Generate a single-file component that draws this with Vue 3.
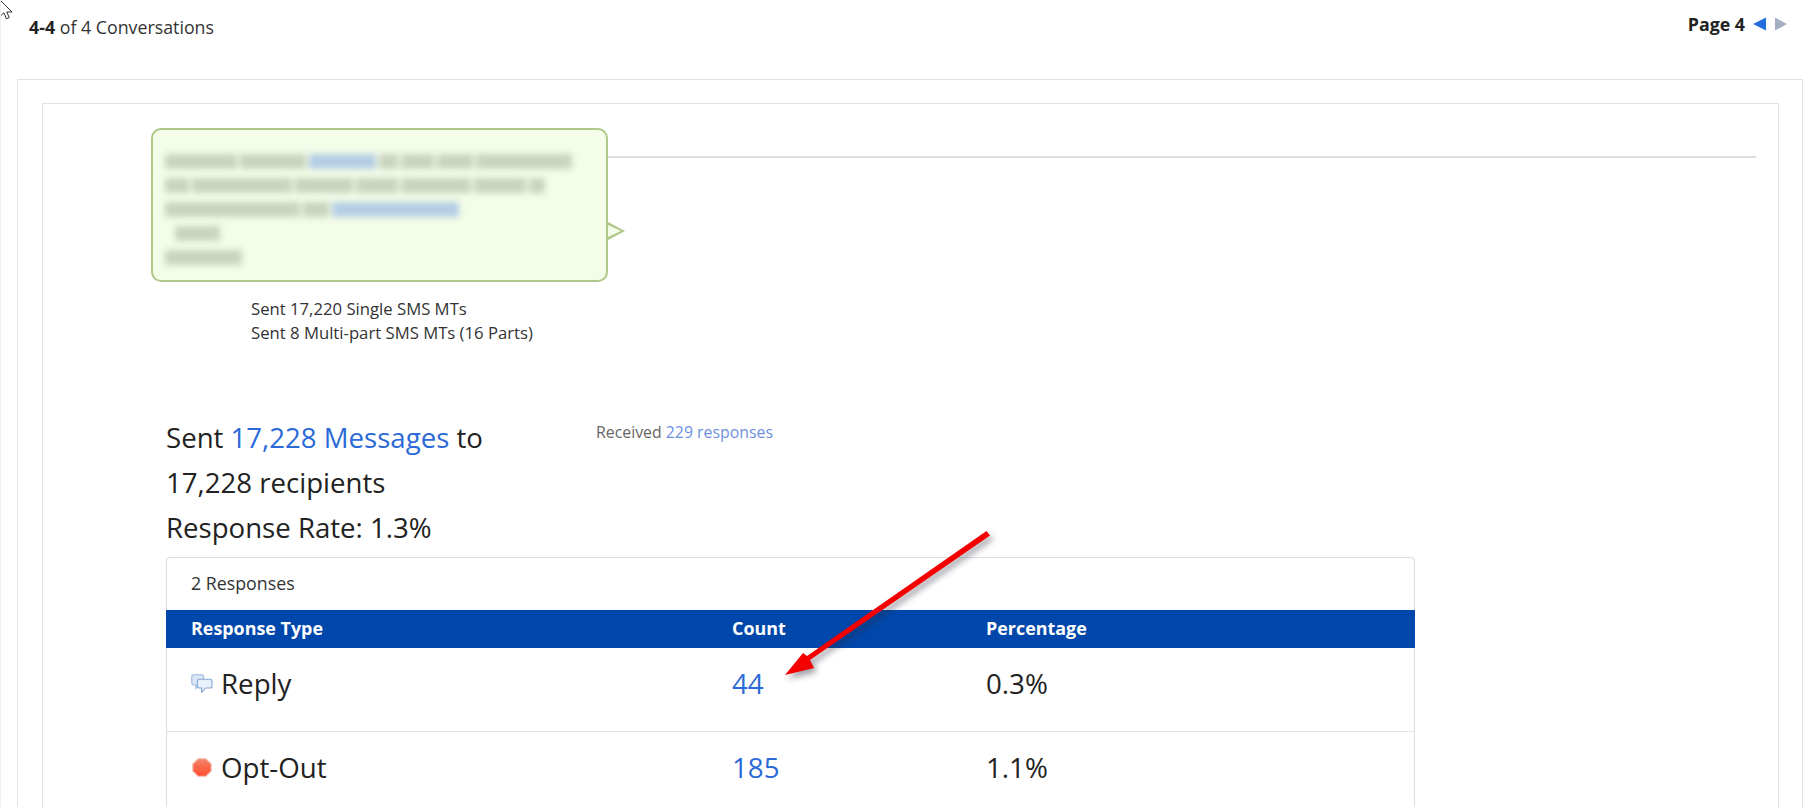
<script setup>
const blurLines = [
  [{ w: 72 }, { w: 66 }, { w: 67, l: true }, { w: 19 }, { w: 33 }, { w: 36 }, { w: 96 }],
  [{ w: 24 }, { w: 100 }, { w: 58 }, { w: 42 }, { w: 70 }, { w: 52 }, { w: 16 }],
  [{ w: 135 }, { w: 26 }, { w: 127, l: true }],
  [{ w: 45 }],
  [{ w: 77 }]
]
const rows = [
  { icon: 'reply', name: 'Reply', count: '44', pct: '0.3%' },
  { icon: 'stop', name: 'Opt-Out', count: '185', pct: '1.1%' }
]
</script>

<template>
  <div class="page">
    <header class="topbar">
      <div class="range"><b>4-4</b> of 4 Conversations</div>
      <div class="pager">
        <b>Page 4</b>
        <svg width="34" height="14" viewBox="0 0 34 14">
          <path d="M0 7 L13 0.5 V13.5 Z" fill="#2270dc" />
          <path d="M22 0.5 L34 7 L22 13.5 Z" fill="#a4aec2" />
        </svg>
      </div>
    </header>

    <div class="outer">
      <div class="inner">
        <div class="thread">
          <div class="bubble">
            <div v-for="(line, i) in blurLines" :key="i" class="blur-line" :class="'l' + i">
              <span
                v-for="(seg, j) in line"
                :key="j"
                class="seg"
                :class="{ link: seg.l }"
                :style="{ width: seg.w + 'px' }"
              ></span>
            </div>
          </div>
          <div class="rule"></div>
        </div>

        <div class="caption">
          <div>Sent 17,220 Single SMS MTs</div>
          <div>Sent 8 Multi-part SMS MTs (16 Parts)</div>
        </div>

        <div class="summary">
          <div class="stats">
            <div>Sent <a>17,228 Messages</a> to</div>
            <div>17,228 recipients</div>
            <div>Response Rate: 1.3%</div>
          </div>
          <div class="received">Received <a>229 responses</a></div>
        </div>

        <div class="table">
          <div class="table-title">2 Responses</div>
          <div class="grid head">
            <div>Response Type</div>
            <div>Count</div>
            <div>Percentage</div>
          </div>
          <div v-for="r in rows" :key="r.name" class="grid row">
            <div class="type">
              <svg v-if="r.icon === 'reply'" class="ico" width="22" height="19" viewBox="0 0 22 19">
                <path d="M2.5 0.8 H10.5 Q12.6 0.8 12.6 3 V9 Q12.6 11 10.5 11 H7 L5 14.5 V11 H2.5 Q0.8 11 0.8 9 V3 Q0.8 0.8 2.5 0.8 Z" fill="#d9e6f6" stroke="#9cb9de" stroke-width="1.1" />
                <path d="M8.5 5.2 H19 Q21 5.2 21 7.2 V12 Q21 14 19 14 H14.4 L10.6 18.4 V14 H8.5 Q6.5 14 6.5 12 V7.2 Q6.5 5.2 8.5 5.2 Z" fill="#e8f0fa" stroke="#86a8d4" stroke-width="1.1" />
              </svg>
              <svg v-else class="ico" width="22" height="19" viewBox="0 0 22 19">
                <defs>
                  <linearGradient id="ball" x1="0" y1="0" x2="0" y2="1">
                    <stop offset="0%" stop-color="#f48a72" />
                    <stop offset="45%" stop-color="#f9694c" />
                    <stop offset="100%" stop-color="#ff4f30" />
                  </linearGradient>
                </defs>
                <path d="M7.2 0.6 H14.8 L20.2 5.9 V13.1 L14.8 18.4 H7.2 L1.8 13.1 V5.9 Z" fill="url(#ball)" stroke="#f6c0b4" stroke-width="1.2" stroke-linejoin="round" />
              </svg>
              <span>{{ r.name }}</span>
            </div>
            <div><a>{{ r.count }}</a></div>
            <div>{{ r.pct }}</div>
          </div>
        </div>
      </div>
    </div>

    <svg class="annot" width="1810" height="807" viewBox="0 0 1810 807">
      <g class="arrow-shadow">
        <path d="M986.5 531 L990 535.5 L810 660 L814 668 L785 675 L803 653 L807 656 Z" fill="#f40000" />
      </g>
    </svg>
    <svg class="cursor" width="14" height="21" viewBox="0 0 14 21">
      <path d="M0.5 0.5 V16 L4 12.8 L6.4 18.8 L9.2 17.6 L6.8 12 H12 Z" fill="#fff" stroke="#333" stroke-width="1" stroke-linejoin="round" />
    </svg>
  </div>
</template>

<style>
html, body { margin: 0; background: #fff; }
</style>

<style scoped>
.page {
  position: relative;
  width: 1810px;
  height: 807px;
  overflow: hidden;
  box-sizing: border-box;
  border-left: 1px solid #eee;
  font-family: "Open Sans", sans-serif;
  color: #222;
  background: #fff;
}
a { color: #2b6ad6; }
.topbar {
  display: flex;
  justify-content: space-between;
  height: 79px;
  padding: 15px 23px 0 28px;
  box-sizing: border-box;
  font-size: 17.8px;
  line-height: 24px;
}
.range { color: #333; }
.range b { color: #222; }
.pager {
  display: flex;
  align-items: flex-start;
  gap: 8px;
  margin-top: -3px;
}
.pager b { color: #222; }
.pager svg { margin-top: 5px; }
.outer {
  margin: 0 7px 0 16px;
  padding: 23px 23px 0 24px;
  border: 1px solid #e2e2e2;
  border-bottom: 0;
  height: 800px;
  box-sizing: border-box;
}
.inner {
  border: 1px solid #e2e2e2;
  border-bottom: 0;
  height: 800px;
  box-sizing: border-box;
  padding-top: 24px;
}
.thread {
  display: flex;
  align-items: flex-start;
  margin: 0 22px 0 108px;
}
.bubble {
  position: relative;
  width: 457px;
  height: 154px;
  box-sizing: border-box;
  flex: none;
  padding: 19px 12px;
  background: #f3fde8;
  border: 2px solid #b0c78a;
  border-radius: 10px;
}
.bubble::before {
  content: "";
  position: absolute;
  right: -19px;
  top: 92px;
  width: 0;
  height: 0;
  border: 9px solid transparent;
  border-left: 17px solid #b0c78a;
  border-right: 0;
}
.bubble::after {
  content: "";
  position: absolute;
  right: -15px;
  top: 95px;
  width: 0;
  height: 0;
  border: 6px solid transparent;
  border-left: 13px solid #f3fde8;
  border-right: 0;
}
.blur-line {
  display: flex;
  gap: 3px;
  height: 24px;
  filter: blur(3.4px);
  align-items: center;
}
.l3 { padding-left: 10px; }
.seg {
  height: 15px;
  background: #c9d3bd;
}
.seg.link { background: #b4cde4; }
.rule {
  flex: 1;
  height: 2px;
  margin-top: 28px;
  background: #ddd;
}
.caption {
  margin: 15px 0 0 208px;
  font-size: 16.7px;
  line-height: 24px;
  color: #333;
}
.summary {
  display: flex;
  margin: 70px 0 0 123px;
}
.stats {
  width: 430px;
  font-size: 27.6px;
  line-height: 45px;
  color: #222;
}
.received {
  margin-top: 7px;
  font-size: 15.85px;
  line-height: 20px;
  color: #666;
}
.received a { color: #6e8fe0; }
.table {
  width: 1249px;
  margin: 7px 0 0 123px;
  border: 1px solid #ddd;
  border-bottom: 0;
  border-radius: 4px 4px 0 0;
  box-sizing: border-box;
}
.table-title {
  height: 52px;
  padding-left: 24px;
  font-size: 17.8px;
  line-height: 50px;
  color: #333;
}
.grid {
  display: grid;
  grid-template-columns: 541px 254px 1fr;
  padding-left: 24px;
}
.head {
  height: 38px;
  margin: 0 -1px;
  padding: 0 0 2px 25px;
  box-sizing: border-box;
  align-items: center;
  background: #0047ab;
  color: #fff;
  font-size: 17.9px;
  font-weight: 700;
}
.row {
  height: 84px;
  padding-top: 13px;
  box-sizing: border-box;
  font-size: 27.7px;
  line-height: 44px;
  border-bottom: 1px solid #e2e2e2;
  color: #222;
}
.type {
  display: flex;
  align-items: center;
  align-self: start;
  height: 44px;
  gap: 8px;
}
.annot {
  position: absolute;
  left: -1px;
  top: 0;
  pointer-events: none;
}
.arrow-shadow { filter: drop-shadow(3px 4px 3px rgba(40, 40, 60, 0.45)); }
.cursor {
  position: absolute;
  left: -1px;
  top: 0;
}
</style>
